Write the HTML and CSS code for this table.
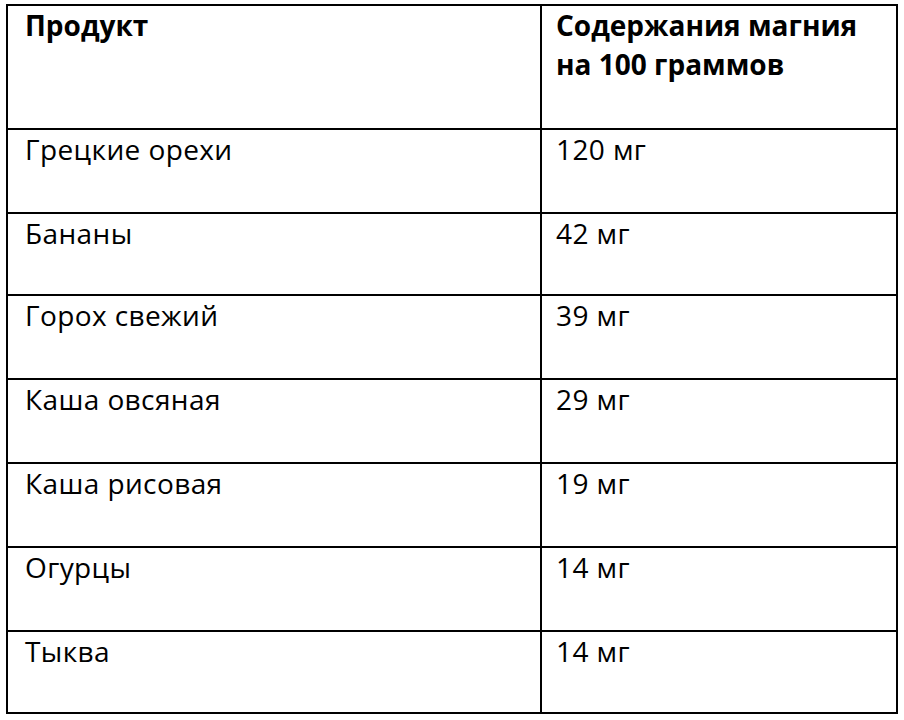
FILE: index.html
```html
<!DOCTYPE html>
<html lang="ru">
<head>
<meta charset="utf-8">
<link rel="stylesheet" href="styles.css">
</head>
<body>
<div class="table">
  <div class="cell c1 head">Продукт</div>
  <div class="cell c2 head">Содержания магния<br>на 100 граммов</div>
  <div class="cell c1">Грецкие орехи</div>
  <div class="cell c2">120 мг</div>
  <div class="cell c1">Бананы</div>
  <div class="cell c2">42 мг</div>
  <div class="cell c1">Горох свежий</div>
  <div class="cell c2">39 мг</div>
  <div class="cell c1">Каша овсяная</div>
  <div class="cell c2">29 мг</div>
  <div class="cell c1">Каша рисовая</div>
  <div class="cell c2">19 мг</div>
  <div class="cell c1">Огурцы</div>
  <div class="cell c2">14 мг</div>
  <div class="cell c1">Тыква</div>
  <div class="cell c2">14 мг</div>
</div>
</body>
</html>
```
FILE: styles.css
```css
html, body {
  margin: 0;
  padding: 0;
  background: #ffffff;
}
body {
  padding: 4px 0 0 6px;
  font-family: "Open Sans", "Noto Sans", sans-serif;
  font-size: 28px;
  line-height: 39px;
  color: #000000;
}
.table {
  display: grid;
  width: 890px;
  grid-template-columns: 534px 356px;
  grid-template-rows: 124px 84px 82px 84px 84px 84px 84px 82px;
  border-top: 2px solid #000;
  border-left: 2px solid #000;
}
.cell {
  border-right: 2px solid #000;
  border-bottom: 2px solid #000;
  padding-top: 0;
  box-sizing: border-box;
  letter-spacing: 0.4px;
}
.c1 { padding-left: 17px; }
.c2 { padding-left: 14px; }
.head { font-weight: bold; letter-spacing: 0; }
```
